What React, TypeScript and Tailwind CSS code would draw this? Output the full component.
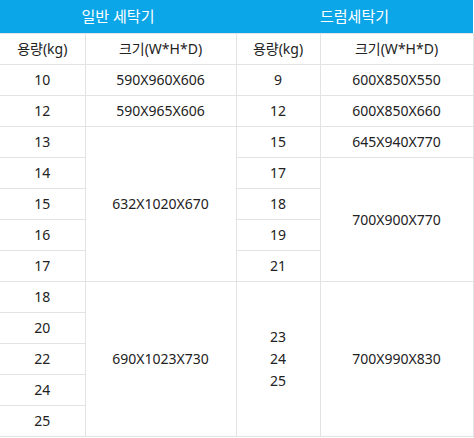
import React from 'react';

const cell = 'border border-[#e3e3e3] text-center align-middle p-0';

export default function App() {
  const leftRows: { kg: string; size?: string; span?: number }[] = [
    { kg: '10', size: '590X960X606' },
    { kg: '12', size: '590X965X606' },
    { kg: '13', size: '632X1020X670', span: 5 },
    { kg: '14' },
    { kg: '15' },
    { kg: '16' },
    { kg: '17' },
    { kg: '18', size: '690X1023X730', span: 5 },
    { kg: '20' },
    { kg: '22' },
    { kg: '24' },
    { kg: '25' },
  ];

  return (
    <div className="w-[474px] h-[438px] bg-white overflow-hidden" style={{ fontFamily: '"Noto Sans", "Noto Sans CJK KR", sans-serif' }}>
      <table className="border-collapse table-fixed w-[473px] text-[14px] text-[#222]">
        <colgroup>
          <col className="w-[85px]" />
          <col className="w-[151px]" />
          <col className="w-[84px]" />
          <col className="w-[153px]" />
        </colgroup>
        <thead>
          <tr className="h-[33px] bg-[#0aa6e8] text-white text-[15px]">
            <th colSpan={2} className="font-normal p-0">일반 세탁기</th>
            <th colSpan={2} className="font-normal p-0">드럼세탁기</th>
          </tr>
          <tr className="h-[31px]">
            <td className={`${cell} border-l-0`}>용량(kg)</td>
            <td className={cell}>크기(W*H*D)</td>
            <td className={cell}>용량(kg)</td>
            <td className={cell}>크기(W*H*D)</td>
          </tr>
        </thead>
        <tbody>
          {leftRows.map((r, i) => (
            <tr key={i} className="h-[31px]">
              <td className={`${cell} border-l-0`}>{r.kg}</td>
              {r.size && (
                <td className={cell} rowSpan={r.span}>
                  {r.size}
                </td>
              )}
              {i === 0 && (
                <>
                  <td className={cell}>9</td>
                  <td className={cell}>600X850X550</td>
                </>
              )}
              {i === 1 && (
                <>
                  <td className={cell}>12</td>
                  <td className={cell}>600X850X660</td>
                </>
              )}
              {i === 2 && (
                <>
                  <td className={cell}>15</td>
                  <td className={cell}>645X940X770</td>
                </>
              )}
              {i === 3 && (
                <>
                  <td className={cell}>17</td>
                  <td className={cell} rowSpan={4}>700X900X770</td>
                </>
              )}
              {i === 4 && <td className={cell}>18</td>}
              {i === 5 && <td className={cell}>19</td>}
              {i === 6 && <td className={cell}>21</td>}
              {i === 7 && (
                <>
                  <td className={cell} rowSpan={5}>
                    <div className="leading-[22px]">
                      23
                      <br />
                      24
                      <br />
                      25
                    </div>
                  </td>
                  <td className={cell} rowSpan={5}>700X990X830</td>
                </>
              )}
            </tr>
          ))}
        </tbody>
      </table>
    </div>
  );
}
